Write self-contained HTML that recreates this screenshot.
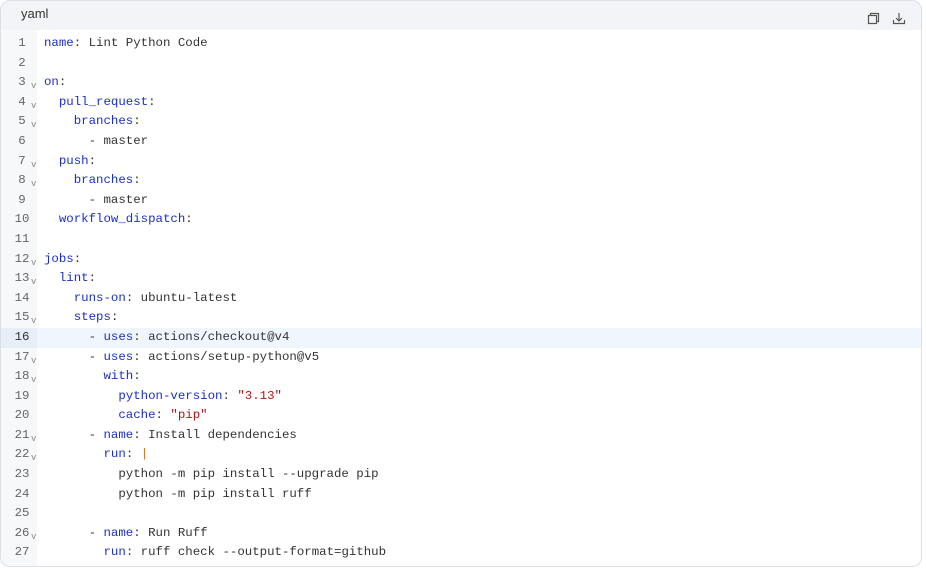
<!DOCTYPE html>
<html><head><style>
body{margin:0;background:#fff;width:926px;height:571px;overflow:hidden}
.box{position:absolute;left:0;top:0;width:920px;height:565px;border:1px solid #dcdfe4;border-radius:10px;overflow:hidden;background:#fff}
.hdr{height:29px;background:#f3f4f7;position:relative}
.hdr span{position:absolute;left:20px;top:5px;font:13px "Liberation Sans",sans-serif;color:#333}
.gut{position:absolute;left:0;top:29px;width:36px;bottom:0;background:#f7f8fa}
.code{position:absolute;left:0;top:33px;width:100%;font:12.4px/19.6px "Liberation Mono",monospace;color:#333}
.l{height:19.6px;position:relative;white-space:pre}
.n{position:absolute;left:12px;color:#666;width:18px;text-align:center}
.n i{font-style:normal;font-size:9px;position:absolute;left:18px;top:4px;color:#888}
.t{position:absolute;left:43px}
.k{color:#1a2fc8}
.s{color:#b31515}
.hl{background:#eff6fd}
.hl .n{color:#333}
.hl::before{content:"";position:absolute;left:0;top:0;width:36px;height:100%;background:#e6eef8}
</style></head><body>
<div class="box">
<div class="hdr"><span>yaml</span>
<svg style="position:absolute;left:866px;top:11px" width="13" height="13" viewBox="0 0 13 13" fill="none" stroke="#555" stroke-width="1.2"><rect x="1.5" y="3.5" width="8" height="8"/><path d="M3.5 3.5V1.5h8v8h-2"/></svg>
<svg style="position:absolute;left:891px;top:11px" width="14" height="13" viewBox="0 0 14 13" fill="none" stroke="#555" stroke-width="1.2"><path d="M7 1v8M4 6l3 3 3-3M1.5 8v3.5h11V8"/></svg>
</div>
<div class="gut"></div>
<div class="code">
<div class="l"><span class="n">1</span><span class="t"><span class="k">name</span>: Lint Python Code</span></div>
<div class="l"><span class="n">2</span></div>
<div class="l"><span class="n">3<i>v</i></span><span class="t"><span class="k">on</span>:</span></div>
<div class="l"><span class="n">4<i>v</i></span><span class="t">  <span class="k">pull_request</span>:</span></div>
<div class="l"><span class="n">5<i>v</i></span><span class="t">    <span class="k">branches</span>:</span></div>
<div class="l"><span class="n">6</span><span class="t">      - master</span></div>
<div class="l"><span class="n">7<i>v</i></span><span class="t">  <span class="k">push</span>:</span></div>
<div class="l"><span class="n">8<i>v</i></span><span class="t">    <span class="k">branches</span>:</span></div>
<div class="l"><span class="n">9</span><span class="t">      - master</span></div>
<div class="l"><span class="n">10</span><span class="t">  <span class="k">workflow_dispatch</span>:</span></div>
<div class="l"><span class="n">11</span></div>
<div class="l"><span class="n">12<i>v</i></span><span class="t"><span class="k">jobs</span>:</span></div>
<div class="l"><span class="n">13<i>v</i></span><span class="t">  <span class="k">lint</span>:</span></div>
<div class="l"><span class="n">14</span><span class="t">    <span class="k">runs-on</span>: ubuntu-latest</span></div>
<div class="l"><span class="n">15<i>v</i></span><span class="t">    <span class="k">steps</span>:</span></div>
<div class="l hl"><span class="n">16</span><span class="t">      - <span class="k">uses</span>: actions/checkout@v4</span></div>
<div class="l"><span class="n">17<i>v</i></span><span class="t">      - <span class="k">uses</span>: actions/setup-python@v5</span></div>
<div class="l"><span class="n">18<i>v</i></span><span class="t">        <span class="k">with</span>:</span></div>
<div class="l"><span class="n">19</span><span class="t">          <span class="k">python-version</span>: <span class="s">"3.13"</span></span></div>
<div class="l"><span class="n">20</span><span class="t">          <span class="k">cache</span>: <span class="s">"pip"</span></span></div>
<div class="l"><span class="n">21<i>v</i></span><span class="t">      - <span class="k">name</span>: Install dependencies</span></div>
<div class="l"><span class="n">22<i>v</i></span><span class="t">        <span class="k">run</span>: <span class="s" style="color:#e07020">|</span></span></div>
<div class="l"><span class="n">23</span><span class="t">          python -m pip install --upgrade pip</span></div>
<div class="l"><span class="n">24</span><span class="t">          python -m pip install ruff</span></div>
<div class="l"><span class="n">25</span></div>
<div class="l"><span class="n">26<i>v</i></span><span class="t">      - <span class="k">name</span>: Run Ruff</span></div>
<div class="l"><span class="n">27</span><span class="t">        <span class="k">run</span>: ruff check --output-format=github</span></div>
</div>
</div>
</body></html>
